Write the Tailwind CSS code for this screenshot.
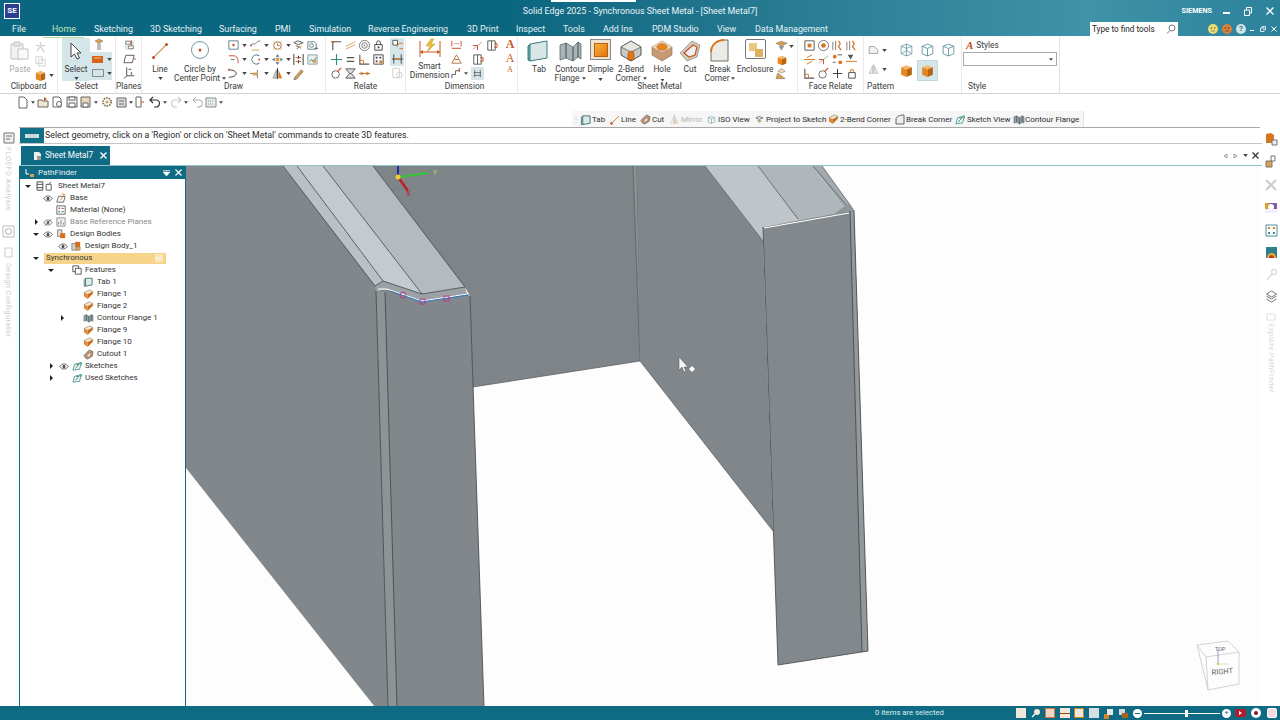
<!DOCTYPE html>
<html>
<head>
<meta charset="utf-8">
<script src="https://cdn.jsdelivr.net/npm/@tailwindcss/browser@4"></script>
</head>
<body class="w-[1280px] h-[720px] overflow-hidden bg-white flex flex-col font-['Roboto','Noto_Sans',sans-serif] text-[#333] text-[8.5px] leading-none">
<svg class="hidden" width="0" height="0">
<defs>
<symbol id="dd" viewBox="0 0 6 4"><path d="M0 0h6L3 4z" fill="#444"/></symbol>
<symbol id="tr" viewBox="0 0 6 8"><path d="M1 0l4 4-4 4z" fill="#222"/></symbol>
<symbol id="td" viewBox="0 0 8 6"><path d="M0 1h8L4 5z" fill="#222"/></symbol>
<symbol id="eye" viewBox="0 0 12 10"><path d="M1 5c2-4 8-4 10 0-2 4-8 4-10 0z" fill="#fff" stroke="#444"/><circle cx="6" cy="5" r="1.8" fill="#444"/></symbol>
<symbol id="eyex" viewBox="0 0 12 10"><path d="M1 5c2-4 8-4 10 0-2 4-8 4-10 0z" fill="#fff" stroke="#666"/><circle cx="6" cy="5" r="1.8" fill="#666"/><path d="M2 9L10 1" stroke="#666"/></symbol>
<symbol id="fl" viewBox="0 0 12 12"><path d="M1 4l6-3 4 2-6 3z" fill="#f2e6d2" stroke="#8a6a44" stroke-width=".6"/><path d="M1 4l4 2v5L1 8z" fill="#e08b2c"/><path d="M5 6l6-3v2L5 11z" fill="#c96f1c"/></symbol>
<symbol id="tabi" viewBox="0 0 12 12"><path d="M3 1.5h8v8l-8 1.5z" fill="#dceaea" stroke="#3d6b6b"/><path d="M3 1.5L1.5 3v8L3 11" fill="none" stroke="#3d6b6b"/></symbol>
<symbol id="cfl" viewBox="0 0 13 12"><path d="M1 3l3-1v7L1 10zM4 2l3 2v7L4 9zM7 4l3-2v7l-3 2zM10 2l2 1v7l-2-1z" fill="#8fa0a4" stroke="#4c5a5e" stroke-width=".5"/></symbol>
<symbol id="cut" viewBox="0 0 12 12"><path d="M3 10l-2-3 6-6 4 2-1 5-5 3z" fill="#b89a7e" stroke="#555" stroke-width=".7"/><path d="M4 7l3-3 2 1-1 3-2 1z" fill="#e4ded2" stroke="#c0481c" stroke-width=".6"/></symbol>
<symbol id="sk" viewBox="0 0 13 12"><path d="M1 11l2-7 8-2-2 8z" fill="#f3f6f6" stroke="#3f8f9a"/><path d="M4 9l5-6M5 4h3" stroke="#2f7f4f"/><path d="M9 1l3 1-1 3z" fill="#48a4b0"/></symbol>
<symbol id="lay" viewBox="0 0 12 12"><path d="M1 1h7v7H1z" fill="#fff" stroke="#444"/><path d="M4 4h7v7H4z" fill="#fff" stroke="#444"/></symbol>
<symbol id="bd" viewBox="0 0 12 12"><path d="M2 1h5v8H2z" fill="#e9e4da" stroke="#555" stroke-width=".8"/><path d="M5 5h6v6H5z" fill="#d4701f"/></symbol>
<symbol id="body1" viewBox="0 0 12 12"><path d="M1 3h6v8H1z" fill="#d0d0cc" stroke="#555" stroke-width=".7"/><path d="M5 1h6v6H5z" fill="#d4701f"/><path d="M6 7h5v4H6z" fill="#e8a45c" stroke="#555" stroke-width=".5"/></symbol>
<symbol id="base" viewBox="0 0 12 12"><path d="M1 11l2-7h8l-2 7z" fill="none" stroke="#555"/><path d="M7 1l4 1M5 9l4-6" stroke="#d8741a"/></symbol>
<symbol id="mat" viewBox="0 0 12 12"><path d="M1 1h10v10H1z" fill="#fff" stroke="#555"/><path d="M3 3h2v2H3z" fill="#c9572a"/><path d="M3 7h2v2H3z" fill="#3f8f9a"/><path d="M6.5 4h3M6.5 8h3" stroke="#555"/></symbol>
<symbol id="pl" viewBox="0 0 12 12"><path d="M1 1h10v10H1z" fill="#eee" stroke="#888"/><path d="M3 9V6M6 9V4M9 9V7" stroke="#999" stroke-width="1.4"/></symbol>
<symbol id="root" viewBox="0 0 22 12"><path d="M2 1h7v10H2z" fill="#fff" stroke="#333"/><path d="M2 4h7M2 8h7" stroke="#333"/><path d="M13 4h6v7h-6z" fill="#fff" stroke="#444"/><path d="M16 4l3-3" stroke="#444"/></symbol>

<symbol id="i-sq" viewBox="0 0 14 14"><path d="M2 2h10v9H2z" fill="#fff" stroke="#5a7f87"/><circle cx="7" cy="6.5" r="1.3" fill="#d1491f"/></symbol>
<symbol id="i-rel" viewBox="0 0 14 14"><path d="M2 7c1-3 4-1 5-2s1-2 5-3" fill="none" stroke="#5a7f87"/><circle cx="2" cy="7" r="1" fill="#d1491f"/><path d="M3 12h8" stroke="#d8a050"/></symbol>
<symbol id="i-cir" viewBox="0 0 14 14"><path d="M2 2h10v10H2z" fill="#dbe7ea"/><circle cx="7" cy="7" r="4" fill="#fff" stroke="#d8741a"/><path d="M7 7V4.5M7 7h2.5" stroke="#555" stroke-width=".7"/></symbol>
<symbol id="i-arc" viewBox="0 0 14 14"><path d="M2 3h5c4 0 5 3 5 8" fill="none" stroke="#d1491f" stroke-width="1"/><path d="M2 3v0M4 7h4" stroke="#5a7f87"/></symbol>
<symbol id="i-c2" viewBox="0 0 14 14"><path d="M11 3a5 5 0 1 0 0 8" fill="none" stroke="#5a7f87" stroke-width="1"/><circle cx="11" cy="7" r="1" fill="#d1491f"/><path d="M9 2l2 1M9 12l2-1" stroke="#5a7f87"/></symbol>
<symbol id="i-mv" viewBox="0 0 14 14"><path d="M7 1l2 3H5zM7 13l2-3H5zM1 7l3-2v4zM13 7l-3-2v4z" fill="#5a7f87"/><path d="M5 5h4v4H5z" fill="#d8a050"/></symbol>
<symbol id="i-arc2" viewBox="0 0 14 14"><path d="M2 3c5 0 8 2 8 4s-3 4-8 4" fill="none" stroke="#333" stroke-width="1"/><circle cx="2" cy="3" r="1" fill="#d1491f"/></symbol>
<symbol id="i-tr" viewBox="0 0 14 14"><path d="M1 7h8M9 3v9" stroke="#777" stroke-width="1"/><path d="M4 6h5v3H4z" fill="#d8a050"/></symbol>
<symbol id="i-mir" viewBox="0 0 14 14"><path d="M7 1v12" stroke="#333"/><path d="M6 3v9H2z" fill="#c9c9c9" stroke="#777" stroke-width=".6"/><path d="M8 3v9h4z" fill="#d8741a"/></symbol>
<symbol id="i-a" viewBox="0 0 14 14"><path d="M2 4l4-2 6 2-5 2zM4 7l4 2M5 11l3-3" stroke="#555" fill="none"/><path d="M7 7l3 1-1 3z" fill="#d8a050"/></symbol>
<symbol id="i-b" viewBox="0 0 14 14"><path d="M2 3h7l2 2v6H2z" fill="none" stroke="#5a7f87"/><circle cx="6" cy="7" r="2" fill="none" stroke="#5a7f87"/><path d="M9 10h4" stroke="#555"/></symbol>
<symbol id="i-d" viewBox="0 0 14 14"><path d="M2 1v12" stroke="#333"/><path d="M12 1v12" stroke="#333"/><path d="M4 5h6M4 9h6" stroke="#d1491f"/><path d="M7 3v3M7 8v3" stroke="#333"/></symbol>
<symbol id="i-e" viewBox="0 0 14 14"><path d="M2 2h10v10H2z" fill="#e6eef0" stroke="#5a7f87" stroke-width=".7"/><path d="M4 9l2-2 2 2 3-4" stroke="#2f7f4f" fill="none"/><circle cx="9" cy="9" r="2" fill="#d8a050"/></symbol>
<symbol id="i-p" viewBox="0 0 14 14"><path d="M3 11l7-8 2 2-7 8-3 1z" fill="#d8a050" stroke="#555" stroke-width=".6"/></symbol>
<symbol id="r-a" viewBox="0 0 14 14"><path d="M3 12V3h9" fill="none" stroke="#555" stroke-width="1.2"/><path d="M1 3h4" stroke="#d1491f" stroke-width="1.2"/></symbol>
<symbol id="r-b" viewBox="0 0 14 14"><path d="M2 8l10-5M2 11l10-5" stroke="#d8a050"/></symbol>
<symbol id="r-c" viewBox="0 0 14 14"><circle cx="7" cy="7" r="5.5" fill="none" stroke="#777"/><circle cx="7" cy="7" r="3" fill="none" stroke="#777"/><circle cx="7" cy="7" r="1" fill="#888"/></symbol>
<symbol id="r-d" viewBox="0 0 14 14"><path d="M3 6h8v6H3z" fill="#fff" stroke="#444"/><path d="M5 6V4a2 2 0 0 1 4 0v2" fill="none" stroke="#444"/><path d="M6 8h2v2H6z" fill="#444"/></symbol>
<symbol id="r-e" viewBox="0 0 14 14"><path d="M7 1v12M1 7h12" stroke="#2f8f7f" stroke-width="1.2"/></symbol>
<symbol id="r-f" viewBox="0 0 14 14"><path d="M3 5h8M3 9h8" stroke="#555" stroke-width="1.3"/></symbol>
<symbol id="r-g" viewBox="0 0 14 14"><path d="M2 2v10h10" fill="none" stroke="#555" stroke-width="1.2"/><path d="M2 8h4v4" fill="none" stroke="#d8741a"/></symbol>
<symbol id="r-h" viewBox="0 0 14 14"><path d="M2 2h10v10H2z" fill="#fff" stroke="#444"/><path d="M4 4h2v2H4zM8 4h2v2H8zM4 8h2v2H4z" fill="#444"/><path d="M8 8h3v3H8z" fill="#d8741a"/></symbol>
<symbol id="r-i" viewBox="0 0 14 14"><circle cx="6" cy="8" r="4" fill="none" stroke="#666"/><path d="M8 5l4-4" stroke="#d1491f" stroke-width="1.2"/></symbol>
<symbol id="r-j" viewBox="0 0 14 14"><path d="M2 2l4 5-4 5h10l-4-5 4-5z" fill="#ddd" stroke="#555"/><path d="M6 7h2" stroke="#555"/></symbol>
<symbol id="r-k" viewBox="0 0 14 14"><path d="M1 7h12" stroke="#a87840"/><circle cx="4" cy="7" r="1.3" fill="none" stroke="#d8741a"/><circle cx="10" cy="7" r="1.3" fill="none" stroke="#d8741a"/></symbol>
<symbol id="r-l" viewBox="0 0 14 14"><path d="M2 2h10v10H2z" fill="#dbe7ea"/><path d="M3 3h5v3H3zM6 8h5v3H6z" fill="#fff" stroke="#555" stroke-width=".7"/><path d="M9 2v6" stroke="#d1491f"/></symbol>
<symbol id="d-a" viewBox="0 0 14 14"><path d="M2 2v6M12 2v6M2 10h10" stroke="#d1491f"/><path d="M4 5h6" stroke="#a8a8a8"/></symbol>
<symbol id="d-b" viewBox="0 0 14 14"><path d="M7 2l5 9H2z" fill="none" stroke="#a87840"/><path d="M5 7h4" stroke="#d1491f"/></symbol>
<symbol id="d-c" viewBox="0 0 14 14"><path d="M2 12V8h4V4h4V1" fill="none" stroke="#555"/><circle cx="10" cy="4" r="1" fill="#d1491f"/></symbol>
<symbol id="d-e" viewBox="0 0 14 14"><path d="M3 2h8v10H3z" fill="none" stroke="#555"/><path d="M7 2v10" stroke="#555"/><path d="M10 5h3v4h-3" fill="none" stroke="#d1491f"/></symbol>
<symbol id="d-f" viewBox="0 0 14 14"><path d="M2 2h10v10H2z" fill="#dbe7ea"/><path d="M4 3v8M10 3v8M3 6h8M3 9h8" stroke="#555" stroke-width=".8"/></symbol>
<symbol id="d-g" viewBox="0 0 14 14"><path d="M2 11L12 3" stroke="#a8a8a8"/><path d="M2 7h5v5" fill="none" stroke="#d1491f"/></symbol>
<symbol id="f-a" viewBox="0 0 14 14"><path d="M2 2h10v10H2z" fill="#fff" stroke="#555"/><path d="M5 5h4v4H5z" fill="#d8741a"/></symbol>
<symbol id="f-b" viewBox="0 0 14 14"><circle cx="7" cy="7" r="5.5" fill="none" stroke="#777"/><circle cx="7" cy="7" r="2.5" fill="#d8741a"/></symbol>
<symbol id="f-c" viewBox="0 0 14 14"><path d="M2 3v9M5 2v10" stroke="#777"/><path d="M8 2l2 3-2 3 3 4" fill="none" stroke="#d8741a" stroke-width="1.3"/></symbol>
<symbol id="f-h" viewBox="0 0 14 14"><circle cx="4" cy="4" r="2" fill="#d8741a"/><circle cx="10" cy="10" r="2" fill="#d8741a"/><path d="M7 2h5M2 10h3" stroke="#555"/></symbol>
<symbol id="f-s" viewBox="0 0 14 14"><path d="M1 7h12M4 5l6-3M4 12l6-3" stroke="#d8741a"/></symbol>
<symbol id="f-t" viewBox="0 0 14 14"><path d="M1 9h12" stroke="#d8741a"/><path d="M3 2h6l-3 5z" fill="#555"/></symbol>
<symbol id="f-u" viewBox="0 0 14 14"><path d="M4 6h7v6H4z" fill="#fff" stroke="#444"/><path d="M6 6V3h3v3" fill="none" stroke="#d8741a"/></symbol>
<symbol id="cube" viewBox="0 0 14 14"><path d="M2 4l5-2 5 2-5 2z" fill="#f3b86a"/><path d="M2 4l5 2v7l-5-2z" fill="#e8861e"/><path d="M12 4l-5 2v7l5-2z" fill="#b9640f"/></symbol>
<symbol id="wire" viewBox="0 0 14 14"><path d="M2 4l5-2 5 2v7l-5 2-5-2z M2 4l5 2 5-2 M7 6v7" fill="none" stroke="#5a8f9a" stroke-width=".8"/></symbol>
<symbol id="wire2" viewBox="0 0 14 14"><path d="M2 4l5-2 5 2v7l-5 2-5-2z M2 4l5 2 5-2 M7 6v7 M2 11l5-3 5 3M7 2v6" fill="none" stroke="#5a8f9a" stroke-width=".7"/></symbol>
<symbol id="stop" viewBox="0 0 14 14"><path d="M2 3h6l4 4v4H2z" fill="#f3f3f3" stroke="#999"/></symbol>
</defs>
</svg>

<!-- title bar -->
<header class="relative h-[36px] shrink-0 flex flex-col bg-linear-to-r from-[#0b6680] from-40% via-[#3f93a8] via-85% to-[#2b829b] text-white">
  <div class="absolute top-0 left-[551px] w-[85px] h-[2px] bg-white"></div>
  <div class="h-[22px] grid grid-cols-[1fr_auto_1fr] items-center">
    <div class="pl-[4px]"><div class="w-[16px] h-[16px] bg-[#2b3e90] border border-white text-[8px] font-bold flex items-center justify-center">SE</div></div>
    <div class="text-[8.9px] text-[#eaf4f6]">Solid Edge 2025 - Synchronous Sheet Metal - [Sheet Metal7]</div>
    <div class="flex items-center justify-end pr-[4px]">
      <span class="text-[7.2px] font-bold mr-[11px]">SIEMENS</span>
      <span class="w-[7px] h-[2px] bg-white mt-[3px] mr-[14px]"></span>
      <svg class="w-[8px] h-[9px] mr-[14px]" viewBox="0 0 8 9"><path d="M0.5 3h5v5.5h-5zM2.5 3V.5h5v5.500h-2" fill="none" stroke="#fff"/></svg>
      <svg class="w-[8px] h-[8px] mr-[2px]" viewBox="0 0 8 8"><path d="M.5.5l7 7M7.5.5l-7 7" stroke="#fff" stroke-width="1.3"/></svg>
    </div>
  </div>
  <div class="relative flex-1 flex items-start">
    <nav class="flex pl-[12px] text-[8.9px] text-[#e3f0f3] items-center h-[14px] whitespace-nowrap">
      <span class="w-[40px]">File</span>
      <span class="relative w-[42px] text-[#bfe6b8]">Home<span class="absolute -left-[9px] w-[41px] top-[12px] h-px bg-[#b7d99a]"></span></span>
      <span class="w-[56px]">Sketching</span>
      <span class="w-[69px]">3D Sketching</span>
      <span class="w-[56px]">Surfacing</span>
      <span class="w-[34px]">PMI</span>
      <span class="w-[59px]">Simulation</span>
      <span class="w-[99px]">Reverse Engineering</span>
      <span class="w-[49px]">3D Print</span>
      <span class="w-[47px]">Inspect</span>
      <span class="w-[40px]">Tools</span>
      <span class="w-[49px]">Add Ins</span>
      <span class="w-[65px]">PDM Studio</span>
      <span class="w-[38px]">View</span>
      <span>Data Management</span>
    </nav>
    <div class="ml-auto flex items-center h-[14px] pr-[3px]">
      <div class="w-[88px] h-[14px] bg-white text-[#222] text-[8.2px] flex items-center justify-between pl-[2px] pr-[2px] mr-[30px]">Type to find tools
        <svg class="w-[10px] h-[10px]" viewBox="0 0 10 10"><circle cx="6" cy="4" r="3" fill="none" stroke="#777"/><path d="M4 6.5L1 9.5" stroke="#777"/></svg>
      </div>
      <svg class="w-[10px] h-[10px] mr-[4px]" viewBox="0 0 10 10"><circle cx="5" cy="5" r="5" fill="#e6dc70"/><circle cx="3.400" cy="4" r=".7" fill="#555"/><circle cx="6.600" cy="4" r=".7" fill="#555"/><path d="M3 6.500c1 1 3 1 4 0" fill="none" stroke="#555" stroke-width=".6"/></svg>
      <svg class="w-[10px] h-[10px] mr-[4px]" viewBox="0 0 10 10"><circle cx="5" cy="5" r="5" fill="#d9803f"/><circle cx="3.400" cy="4" r=".7" fill="#6b3010"/><circle cx="6.600" cy="4" r=".7" fill="#6b3010"/><path d="M3 7.500c1-1 3-1 4 0" fill="none" stroke="#6b3010" stroke-width=".6"/></svg>
      <span class="w-[10px] h-[10px] rounded-full bg-[#cfe3e8] mr-[4px] flex items-center justify-center text-[#2b829b] text-[8px] font-bold">?</span>
      <span class="w-[4px] h-px bg-white mr-[6px] mt-[2px]"></span>
      <svg class="w-[6px] h-[6px] mr-[5px]" viewBox="0 0 6 6"><path d="M.5 2h3.500v3.500H.5zM2 2V.5h3.500V4" fill="none" stroke="#fff" stroke-width=".8"/></svg>
      <svg class="w-[6px] h-[6px]" viewBox="0 0 6 6"><path d="M.5.5l5 5M5.500.5l-5 5" stroke="#fff"/></svg>
    </div>
  </div>
</header>

<!-- ribbon -->
<section class="h-[58px] shrink-0 flex border-b border-[#d4d4d4] text-[8.4px] text-[#3a3a3a] bg-white">
  <!-- Clipboard -->
  <div class="w-[58px] flex flex-col border-r border-[#eaeaea]">
    <div class="h-[46px] flex pl-[9px] pt-[5px]">
      <div class="w-[22px] flex flex-col items-center text-[#aaa]">
        <svg class="w-[20px] h-[19px] shrink-0" viewBox="0 0 20 19"><path d="M1 3h12v15H1z" fill="#f2f2f2" stroke="#c4c4c4"/><path d="M4 1h6v4H4z" fill="#e6e6e6" stroke="#c4c4c4"/><path d="M8 8h10v10H8z" fill="#fafafa" stroke="#c4c4c4"/></svg>
        <span class="mt-[5px]">Paste</span>
      </div>
      <div class="ml-[3px] flex flex-col gap-[1px] items-start">
        <svg class="w-[13px] h-[13px]" viewBox="0 0 14 14"><path d="M7 1v5l4 6M7 6l-4 5M2 5h4M8 5h4" stroke="#cfcfcf" stroke-width="1.3" fill="none"/></svg>
        <svg class="w-[13px] h-[13px]" viewBox="0 0 14 14"><path d="M2 2h7v7H2z M5 5h7v7H5z" fill="#fff" stroke="#cfcfcf"/></svg>
        <div class="flex items-center"><svg class="w-[13px] h-[13px]"><use href="#cube"/></svg><svg class="w-[5px] h-[3px] ml-[2px]"><use href="#dd"/></svg></div>
      </div>
    </div>
    <div class="text-center">Clipboard</div>
  </div>
  <!-- Select -->
  <div class="w-[58px] flex flex-col border-r border-[#eaeaea]">
    <div class="h-[46px] flex pl-[4px] pt-[2px]">
      <div class="w-[28px] h-[43px] bg-[#d5e6ea] flex flex-col items-center pt-[4px]">
        <svg class="w-[14px] h-[18px] shrink-0" viewBox="0 0 14 18"><path d="M2 1l10 10H8l2.500 5-2.500 1-2.500-5L2 15z" fill="#fff" stroke="#444"/></svg>
        <span class="mt-[5px]">Select</span>
        <svg class="w-[5px] h-[3px] mt-[4px]"><use href="#dd"/></svg>
      </div>
      <div class="flex flex-col">
        <svg class="w-[14px] h-[14px] ml-[2px]" viewBox="0 0 14 14"><path d="M3 3l4-2 4 2-4 3z" fill="#d8a050" stroke="#777" stroke-width=".5"/><path d="M5 6h4v6H5z" fill="#bbb"/></svg>
        <div class="flex items-center bg-[#d5e6ea] h-[14px] w-[22px] pl-[2px]"><svg class="w-[13px] h-[9px]" viewBox="0 0 13 9"><path d="M0 1h11v7H0z" fill="#d8641a"/><path d="M2 3h7" stroke="#f4c080"/></svg><svg class="w-[5px] h-[3px] ml-[2px]"><use href="#dd"/></svg></div>
        <div class="flex items-center bg-[#d5e6ea] h-[14px] w-[22px] pl-[2px]"><svg class="w-[13px] h-[9px]" viewBox="0 0 13 9"><path d="M.5.5h11v7H.5z" fill="none" stroke="#888"/></svg><svg class="w-[5px] h-[3px] ml-[2px]"><use href="#dd"/></svg></div>
      </div>
    </div>
    <div class="text-center">Select</div>
  </div>
  <!-- Planes -->
  <div class="w-[26px] flex flex-col border-r border-[#eaeaea]">
    <div class="h-[46px] flex flex-col items-center pt-[2px] pl-[1px]">
      <svg class="w-[13px] h-[14px]"><use href="#r-l"/></svg>
      <svg class="w-[13px] h-[14px]" viewBox="0 0 14 14"><path d="M3 3h9l-2 8H1z" fill="#fff" stroke="#555"/><path d="M12 7h2" stroke="#d1491f"/></svg>
      <svg class="w-[13px] h-[14px]" viewBox="0 0 14 14"><path d="M4 1v9h8M4 10l-3 3M6 3h3M9 6v3" stroke="#444" fill="none"/></svg>
    </div>
    <div class="text-center">Planes</div>
  </div>
  <!-- Draw -->
  <div class="w-[184px] flex flex-col border-r border-[#eaeaea]">
    <div class="h-[46px] flex pt-[2px]">
      <div class="w-[36px] flex flex-col items-center pt-[4px]">
        <svg class="w-[18px] h-[18px] shrink-0" viewBox="0 0 18 18"><path d="M2 16L16 2" stroke="#c8a070" stroke-width="1.2"/><circle cx="2.500" cy="15.500" r="1.500" fill="#c9471c"/><circle cx="15.500" cy="2.500" r="1.500" fill="#c9471c"/></svg>
        <span class="mt-[5px]">Line</span>
        <svg class="w-[5px] h-[3px] mt-[4px]"><use href="#dd"/></svg>
      </div>
      <div class="w-[44px] flex flex-col items-center pt-[2px] whitespace-nowrap">
        <svg class="w-[20px] h-[20px] shrink-0" viewBox="0 0 20 20"><circle cx="10" cy="10" r="8.500" fill="none" stroke="#6f9aa3"/><circle cx="10" cy="10" r="1.500" fill="#d1491f"/></svg>
        <span class="mt-[5px]">Circle by</span>
        <span class="mt-px flex items-center">Center Point<svg class="w-[4px] h-[3px] ml-[2px]"><use href="#dd"/></svg></span>
      </div>
      <div class="ml-[5px] grid grid-cols-[22px_22px_21px] grid-rows-[14px_14px_14px] items-center">
        <div class="flex items-center"><svg class="w-[13px] h-[13px]"><use href="#i-sq"/></svg><svg class="w-[5px] h-[3px] ml-[2px]"><use href="#dd"/></svg></div>
        <div class="flex items-center"><svg class="w-[13px] h-[13px]"><use href="#i-rel"/></svg><svg class="w-[5px] h-[3px] ml-[2px]"><use href="#dd"/></svg></div>
        <div class="flex items-center"><svg class="w-[13px] h-[13px]"><use href="#i-cir"/></svg><svg class="w-[5px] h-[3px] ml-[2px]"><use href="#dd"/></svg></div>
        <div class="flex items-center"><svg class="w-[13px] h-[13px]"><use href="#i-arc"/></svg><svg class="w-[5px] h-[3px] ml-[2px]"><use href="#dd"/></svg></div>
        <div class="flex items-center"><svg class="w-[13px] h-[13px]"><use href="#i-c2"/></svg><svg class="w-[5px] h-[3px] ml-[2px]"><use href="#dd"/></svg></div>
        <div class="flex items-center"><svg class="w-[13px] h-[13px]"><use href="#i-mv"/></svg><svg class="w-[5px] h-[3px] ml-[2px]"><use href="#dd"/></svg></div>
        <div class="flex items-center"><svg class="w-[13px] h-[13px]"><use href="#i-arc2"/></svg><svg class="w-[5px] h-[3px] ml-[2px]"><use href="#dd"/></svg></div>
        <div class="flex items-center"><svg class="w-[13px] h-[13px]"><use href="#i-tr"/></svg><svg class="w-[5px] h-[3px] ml-[2px]"><use href="#dd"/></svg></div>
        <div class="flex items-center"><svg class="w-[13px] h-[13px]"><use href="#i-mir"/></svg><svg class="w-[5px] h-[3px] ml-[2px]"><use href="#dd"/></svg></div>
      </div>
      <div class="grid grid-cols-[14px_14px] grid-rows-[14px_14px_14px] items-center">
        <svg class="w-[13px] h-[13px]"><use href="#i-a"/></svg>
        <svg class="w-[13px] h-[13px]"><use href="#i-b"/></svg>
        <svg class="w-[13px] h-[13px]"><use href="#i-d"/></svg>
        <svg class="w-[13px] h-[13px]"><use href="#i-e"/></svg>
        <svg class="w-[13px] h-[13px]"><use href="#i-p"/></svg>
      </div>
    </div>
    <div class="text-center">Draw</div>
  </div>
  <!-- Relate -->
  <div class="w-[80px] flex flex-col border-r border-[#eaeaea]">
    <div class="h-[46px] flex pt-[2px] pl-[3px]">
      <div class="grid grid-cols-[14px_14px_14px_14px] grid-rows-[14px_14px_14px] items-center justify-items-center">
        <svg class="w-[13px] h-[13px]"><use href="#r-a"/></svg>
        <svg class="w-[13px] h-[13px]"><use href="#r-b"/></svg>
        <svg class="w-[13px] h-[13px]"><use href="#r-c"/></svg>
        <svg class="w-[13px] h-[13px]"><use href="#r-d"/></svg>
        <svg class="w-[13px] h-[13px]"><use href="#r-e"/></svg>
        <svg class="w-[13px] h-[13px]"><use href="#r-f"/></svg>
        <svg class="w-[13px] h-[13px]"><use href="#r-g"/></svg>
        <svg class="w-[13px] h-[13px]"><use href="#r-h"/></svg>
        <svg class="w-[13px] h-[13px]"><use href="#r-i"/></svg>
        <svg class="w-[13px] h-[13px]"><use href="#r-j"/></svg>
        <svg class="w-[13px] h-[13px]"><use href="#r-k"/></svg>
      </div>
      <div class="ml-[5px] w-[14px] flex flex-col items-center">
        <div class="bg-[#d5e6ea] w-[14px] flex flex-col items-center"><svg class="w-[13px] h-[14px]" viewBox="0 0 14 14"><path d="M2 2h5v5H2z" fill="#fff" stroke="#555"/><path d="M6 9l3-4M9 5h4M9 11h4" stroke="#d8741a"/></svg><svg class="w-[13px] h-[14px]" viewBox="0 0 14 14"><path d="M3 2v10M11 2v10M1 7h12" stroke="#444"/><path d="M5 7h4" stroke="#d8741a" stroke-width="1.5"/></svg></div>
        <svg class="w-[13px] h-[14px]" viewBox="0 0 14 14"><path d="M2 2h7v10H2z" fill="none" stroke="#ccc"/><circle cx="9" cy="9" r="3" fill="none" stroke="#ccc"/></svg>
      </div>
    </div>
    <div class="text-center">Relate</div>
  </div>
  <!-- Dimension -->
  <div class="w-[112px] flex flex-col border-r border-[#eaeaea]">
    <div class="h-[46px] flex pt-[2px]">
      <div class="w-[44px] flex flex-col items-center pl-[3px]">
        <svg class="w-[22px] h-[21px] shrink-0" viewBox="0 0 22 21"><path d="M1 3v16M21 3v16M1 14h20" stroke="#c9571c"/><path d="M1 14l3-2v4zM21 14l-3-2v4z" fill="#c9571c"/><path d="M12 1l-5 7h4l-3 6 8-8h-4l3-5z" fill="#e8c040" stroke="#b98a20" stroke-width=".5"/></svg>
        <span class="mt-[3px]">Smart</span>
        <span class="mt-px">Dimension</span>
      </div>
      <div class="grid grid-cols-[21px_14px_14px] grid-rows-[14px_14px_14px] items-center">
        <svg class="w-[13px] h-[13px]"><use href="#d-a"/></svg>
        <svg class="w-[13px] h-[13px]"><use href="#d-g"/></svg>
        <svg class="w-[13px] h-[13px]"><use href="#d-e"/></svg>
        <svg class="w-[13px] h-[13px]"><use href="#d-b"/></svg>
        <svg class="w-[13px] h-[13px]"><use href="#d-e"/></svg>
        <span></span>
        <div class="flex items-center"><svg class="w-[13px] h-[13px]"><use href="#d-c"/></svg><svg class="w-[4px] h-[3px] ml-px"><use href="#dd"/></svg></div>
        <svg class="w-[13px] h-[13px] bg-[#d5e6ea]"><use href="#d-f"/></svg>
      </div>
      <div class="ml-[4px] w-[14px] flex flex-col items-center font-['Liberation_Serif',serif] text-[#c9571c]">
        <span class="h-[14px] text-[12px] font-bold">A</span>
        <span class="h-[14px] text-[12px]">A</span>
        <span class="h-[14px] text-[8px]">A</span>
      </div>
    </div>
    <div class="pl-[6px] text-center">Dimension</div>
  </div>
  <!-- Sheet Metal -->
  <div class="w-[280px] flex flex-col border-r border-[#eaeaea]">
    <div class="h-[46px] flex pl-[5px] pt-[3px]">
      <div class="w-[32px] flex flex-col items-center">
        <svg class="w-[24px] h-[23px] shrink-0" viewBox="0 0 24 23"><path d="M3 5l17-3v17L3 22z" fill="#d9e6e6" stroke="#3d7a7a"/><path d="M3 5L1 7v14l2 1" fill="#5a9a9a" stroke="#3d7a7a"/></svg>
        <span class="mt-[3px]">Tab</span>
      </div>
      <div class="w-[30px] flex flex-col items-center whitespace-nowrap">
        <svg class="w-[24px] h-[23px] shrink-0" viewBox="0 0 24 23"><path d="M2 6l6-2v15l-6 2zM8 4l7 4v14l-7-3zM15 8l5-5v15l-5 4zM20 3l3 2v15l-3-2z" fill="#a9b4b8" stroke="#4c5a5e" stroke-width=".7"/></svg>
        <span class="mt-[3px]">Contour</span><span class="mt-px flex items-center">Flange<svg class="w-[4px] h-[3px] ml-[2px]"><use href="#dd"/></svg></span>
      </div>
      <div class="w-[31px] flex flex-col items-center">
        <div class="w-[21px] h-[21px] shrink-0 border border-[#888] bg-[#f1e3d4] flex items-center justify-center"><div class="w-[14px] h-[14px] bg-linear-to-br from-[#f8b13a] to-[#e2730e] border border-[#b8600c]"></div></div>
        <span class="mt-[5px]">Dimple</span>
        <svg class="w-[5px] h-[3px] mt-[5px]"><use href="#dd"/></svg>
      </div>
      <div class="w-[30px] flex flex-col items-center whitespace-nowrap">
        <svg class="w-[24px] h-[23px] shrink-0" viewBox="0 0 24 23"><path d="M2 8l10-6 10 6v8l-10 6L2 16z" fill="#c8c8c4" stroke="#555"/><path d="M2 8l10 5 10-5-10-6z" fill="#e6e6e0" stroke="#555" stroke-width=".7"/><path d="M9 21v-6a3 3 0 0 1 6 0v6z" fill="#e07818" stroke="#9a4c0c" stroke-width=".6"/></svg>
        <span class="mt-[3px]">2-Bend</span><span class="mt-px flex items-center">Corner<svg class="w-[4px] h-[3px] ml-[2px]"><use href="#dd"/></svg></span>
      </div>
      <div class="w-[32px] flex flex-col items-center">
        <svg class="w-[24px] h-[23px] shrink-0" viewBox="0 0 24 23"><path d="M2 8l10-6 10 6v8l-10 6L2 16z" fill="#c79a74" stroke="#8a6a48" stroke-width=".6"/><path d="M2 8l10 5 10-5-10-6z" fill="#ecd6bc"/><ellipse cx="12" cy="8" rx="5" ry="3.200" fill="#e8861e" stroke="#a05a10" stroke-width=".5"/></svg>
        <span class="mt-[3px]">Hole</span>
        <svg class="w-[5px] h-[3px] mt-[6px]"><use href="#dd"/></svg>
      </div>
      <div class="w-[24px] flex flex-col items-center">
        <svg class="w-[24px] h-[23px] shrink-0" viewBox="0 0 24 23"><path d="M2 14L14 2l8 4-3 12-10 4z" fill="#cfcabe" stroke="#8a8a80" stroke-width=".7"/><path d="M6 14l9-8 4 2-2 8-6 2z" fill="#eef1ef" stroke="#d04f1f" stroke-width="1.200"/></svg>
        <span class="mt-[3px]">Cut</span>
      </div>
      <div class="w-[36px] flex flex-col items-center whitespace-nowrap">
        <svg class="w-[24px] h-[23px] shrink-0" viewBox="0 0 24 23"><path d="M3 22V13C3 6 9 1 16 1h4v21z" fill="#ecebe6" stroke="#6e6e66"/><path d="M3 13C3 6 9 1 16 1" fill="none" stroke="#d8741a" stroke-width="2"/></svg>
        <span class="mt-[3px]">Break</span><span class="mt-px flex items-center">Corner<svg class="w-[4px] h-[3px] ml-[2px]"><use href="#dd"/></svg></span>
      </div>
      <div class="w-[34px] flex flex-col items-center">
        <div class="w-[21px] h-[20px] shrink-0 border border-[#777] rounded-[2px] bg-white relative overflow-hidden"><div class="absolute left-[3px] top-[3px] w-[8px] h-[8px] bg-[#e8c684]"></div><div class="absolute left-[9px] top-[9px] w-[8px] h-[8px] bg-[#e0b060]"></div></div>
        <span class="mt-[6px]">Enclosure</span>
      </div>
      <div class="w-[18px] flex flex-col items-start pl-[3px]">
        <div class="flex items-center h-[14px]"><svg class="w-[13px] h-[12px]" viewBox="0 0 14 12"><path d="M1 3l6-2 6 2-6 3z" fill="#d8a050" stroke="#666" stroke-width=".5"/><path d="M4 6h6l-3 5z" fill="#999"/></svg><svg class="w-[5px] h-[3px] ml-[1px]"><use href="#dd"/></svg></div>
        <div class="flex items-center h-[14px]"><svg class="w-[14px] h-[12px]"><use href="#cube"/></svg></div>
        <svg class="w-[13px] h-[14px]" viewBox="0 0 14 14"><path d="M3 4l4-3 4 3-4 2z" fill="#ead8b8" stroke="#666" stroke-width=".5"/><path d="M3 6l8 6H1z" fill="#d8a050" stroke="#666" stroke-width=".5"/></svg>
      </div>
    </div>
    <div class="text-center pl-[4px]">Sheet Metal</div>
  </div>
  <!-- Face relate -->
  <div class="w-[66px] flex flex-col border-r border-[#eaeaea]">
    <div class="h-[46px] pl-[4px] pt-[2px]">
      <div class="grid grid-cols-[14px_14px_14px_14px] grid-rows-[14px_14px_14px] items-center justify-items-center">
        <svg class="w-[13px] h-[13px]"><use href="#f-a"/></svg>
        <svg class="w-[13px] h-[13px]"><use href="#f-b"/></svg>
        <svg class="w-[13px] h-[13px]"><use href="#f-c"/></svg>
        <svg class="w-[13px] h-[13px]"><use href="#f-c"/></svg>
        <svg class="w-[13px] h-[13px]"><use href="#f-s"/></svg>
        <svg class="w-[13px] h-[13px]"><use href="#d-g"/></svg>
        <svg class="w-[13px] h-[13px]"><use href="#f-h"/></svg>
        <svg class="w-[13px] h-[13px]"><use href="#f-t"/></svg>
        <svg class="w-[13px] h-[13px]"><use href="#r-g"/></svg>
        <svg class="w-[13px] h-[13px]"><use href="#r-i"/></svg>
        <svg class="w-[13px] h-[13px]" viewBox="0 0 14 14"><path d="M7 2v10M2 7h10" stroke="#333"/></svg>
        <svg class="w-[13px] h-[13px]"><use href="#f-u"/></svg>
      </div>
    </div>
    <div class="text-center">Face Relate</div>
  </div>
  <!-- Pattern -->
  <div class="w-[30px] flex flex-col whitespace-nowrap">
    <div class="h-[46px] flex flex-col pl-[3px] pt-[8px] gap-[7px]">
      <div class="flex items-center"><svg class="w-[13px] h-[12px]"><use href="#stop"/></svg><svg class="w-[5px] h-[3px] ml-[2px]"><use href="#dd"/></svg></div>
      <div class="flex items-center"><svg class="w-[13px] h-[12px]" viewBox="0 0 14 14"><path d="M7 1v12" stroke="#ccc"/><path d="M6 3v9H2zM8 3v9h4z" fill="#f2f2f2" stroke="#bbb"/></svg><svg class="w-[5px] h-[3px] ml-[2px]"><use href="#dd"/></svg></div>
    </div>
    <div class="pl-[3px]">Pattern</div>
  </div>
  <!-- views -->
  <div class="w-[68px] border-r border-[#eaeaea] flex flex-col">
    <div class="pt-[3px] pl-[2px] grid grid-cols-[21px_21px_21px] grid-rows-[20px_22px] justify-items-center items-center">
      <svg class="w-[15px] h-[15px]"><use href="#wire2"/></svg>
      <svg class="w-[15px] h-[15px]"><use href="#wire"/></svg>
      <svg class="w-[15px] h-[15px]"><use href="#wire"/></svg>
      <svg class="w-[15px] h-[15px]"><use href="#cube"/></svg>
      <div class="w-[21px] h-[21px] bg-[#d5e6ea] border border-[#c2d8dd] flex items-center justify-center"><svg class="w-[15px] h-[15px]"><use href="#cube"/></svg></div>
    </div>
  </div>
  <!-- Style -->
  <div class="w-[98px] flex flex-col border-r border-[#e2e2e2] pl-[1px]">
    <div class="h-[46px] pt-[3px]">
      <div class="flex items-center h-[12px] pl-[3px]"><span class="font-['Liberation_Serif',serif] italic text-[#c9471c] text-[11px] font-bold mr-[3px]">A</span><span>Styles</span></div>
      <div class="w-[94px] h-[14px] border border-[#aaa] bg-white mt-[1px] flex items-center justify-end pr-[3px]"><svg class="w-[4px] h-[3px]"><use href="#dd"/></svg></div>
    </div>
    <div class="pl-[5px]">Style</div>
  </div>
</section>

<!-- QAT -->
<div class="h-[17px] shrink-0 flex items-center pl-[17px] pb-[1px] text-[#555]">
  <svg class="w-[12px] h-[13px]" viewBox="0 0 12 13"><path d="M2 1h5l3 3v8H2z" fill="#fff" stroke="#666"/></svg><svg class="w-[4px] h-[3px] ml-[2px]"><use href="#dd"/></svg>
  <svg class="w-[12px] h-[12px] ml-[2px]" viewBox="0 0 12 12"><path d="M1 4h4l1 1h5v6H1z" fill="#f0e6d2" stroke="#666"/><path d="M7 1l3 2-3 2z" fill="#c9571c"/></svg>
  <svg class="w-[12px] h-[12px] ml-[2px]" viewBox="0 0 12 12"><path d="M2 1h6l2 2v8H2z" fill="#fff" stroke="#666"/><circle cx="8" cy="8" r="2.500" fill="#fff" stroke="#666"/></svg>
  <svg class="w-[12px] h-[12px] ml-[3px]" viewBox="0 0 12 12"><path d="M1 1h10v10H1z" fill="#f2f2f2" stroke="#666"/><path d="M3 7h6v4H3zM3 1h6v3H3z" fill="#fff" stroke="#666"/></svg>
  <svg class="w-[12px] h-[12px] ml-[2px]" viewBox="0 0 12 12"><path d="M1 1h9v10H1z" fill="#e6d8b8" stroke="#666"/><path d="M3 7h5v4H3z" fill="#fff" stroke="#666"/></svg><svg class="w-[4px] h-[3px] ml-[2px]"><use href="#dd"/></svg>
  <svg class="w-[12px] h-[12px] ml-[3px]" viewBox="0 0 12 12"><circle cx="6" cy="6" r="4" fill="none" stroke="#8a7a5a" stroke-width="2" stroke-dasharray="1.500 1"/><circle cx="6" cy="6" r="1.500" fill="#c9a060"/></svg>
  <svg class="w-[12px] h-[12px] ml-[3px]" viewBox="0 0 12 12"><path d="M1 2h9v9H1z" fill="#ddd" stroke="#666"/><path d="M3 5h5M3 8h5" stroke="#666"/></svg><svg class="w-[4px] h-[3px] ml-[1px]"><use href="#dd"/></svg>
  <svg class="w-[12px] h-[12px]" viewBox="0 0 12 12"><path d="M3 1h5v10H3z" fill="#fff" stroke="#666"/><path d="M8 6h3" stroke="#c9571c"/></svg>
  <svg class="w-[12px] h-[12px] ml-[4px]" viewBox="0 0 12 12"><path d="M4 1L1 4l3 3M1 4h6a3 3 0 0 1 0 7H5" fill="none" stroke="#333" stroke-width="1.200"/></svg><svg class="w-[4px] h-[3px] ml-[2px]"><use href="#dd"/></svg>
  <svg class="w-[12px] h-[12px] ml-[3px]" viewBox="0 0 12 12"><path d="M8 1l3 3-3 3M11 4H5a3 3 0 0 0 0 7h2" fill="none" stroke="#ccc" stroke-width="1.200"/></svg><svg class="w-[4px] h-[3px] ml-[2px]"><use href="#dd"/></svg>
  <svg class="w-[12px] h-[12px] ml-[4px]" viewBox="0 0 12 12"><path d="M4 1L1 4l3 3M1 4h6a3 3 0 0 1 0 7H5" fill="none" stroke="#aaa"/></svg>
  <svg class="w-[12px] h-[11px] ml-[1px]" viewBox="0 0 12 11"><path d="M1 1h10v9H1z" fill="#e6eef0" stroke="#8a8a8a"/><path d="M3 4h6M3 7h6" stroke="#8a8a8a" stroke-dasharray="1 1"/></svg><svg class="w-[4px] h-[3px] ml-[2px]"><use href="#dd"/></svg>
</div>

<!-- command bar -->
<div class="h-[17px] shrink-0 flex pl-[19px] pr-[20px]">
  <div class="flex-1 border-b border-[#a8a8a8] flex pl-[553px]">
    <div class="h-[16px] pt-[1px] flex items-center bg-[#f6f6f6] border-r border-[#e4e4e4] text-[8px] text-[#2e2e2e] whitespace-nowrap">
      <span class="w-[7px] h-full flex items-center justify-center text-[#bbb] text-[8px]">⋮</span>
      <span class="w-[29px] flex items-center"><span class="w-[13px] flex justify-center"><svg class="w-[11px] h-[12px]"><use href="#tabi"/></svg></span>Tab</span>
      <span class="w-[31px] flex items-center"><span class="w-[13px] flex justify-center"><svg class="w-[10px] h-[10px]" viewBox="0 0 10 10"><path d="M1 9l8-8" stroke="#c88a40"/><circle cx="1.500" cy="8.500" r="1.200" fill="#c9471c"/></svg></span>Line</span>
      <span class="w-[29px] flex items-center"><span class="w-[13px] flex justify-center"><svg class="w-[11px] h-[11px]"><use href="#cut"/></svg></span>Cut</span>
      <span class="w-[37px] flex items-center text-[#b5b5b5]"><span class="w-[13px] flex justify-center"><svg class="w-[11px] h-[11px] opacity-30"><use href="#i-mir"/></svg></span>Mirror</span>
      <span class="w-[48px] flex items-center"><span class="w-[13px] flex justify-center"><svg class="w-[9px] h-[9px]"><use href="#wire"/></svg></span>ISO View</span>
      <span class="w-[74px] flex items-center"><span class="w-[13px] flex justify-center"><svg class="w-[11px] h-[10px]"><use href="#i-a"/></svg></span>Project to Sketch</span>
      <span class="w-[66px] flex items-center"><span class="w-[13px] flex justify-center"><svg class="w-[11px] h-[11px]"><use href="#fl"/></svg></span>2-Bend Corner</span>
      <span class="w-[61px] flex items-center"><span class="w-[13px] flex justify-center"><svg class="w-[10px] h-[11px]" viewBox="0 0 10 11"><path d="M1 10V5c0-2 3-4 8-4v9z" fill="#eee" stroke="#666"/></svg></span>Break Corner</span>
      <span class="w-[58px] flex items-center"><span class="w-[13px] flex justify-center"><svg class="w-[11px] h-[11px]"><use href="#sk"/></svg></span>Sketch View</span>
      <span class="w-[71px] flex items-center"><span class="w-[13px] flex justify-center"><svg class="w-[12px] h-[11px]"><use href="#cfl"/></svg></span>Contour Flange</span>
    </div>
  </div>
</div>

<!-- main -->
<main class="flex-1 min-h-0 flex">
  <aside class="w-[19px] shrink-0 flex flex-col items-center pr-[2px] text-[#c9cdd0]">
    <svg class="w-[12px] h-[12px] mt-[4px] shrink-0" viewBox="0 0 12 12"><path d="M1 1h10v10H1z" fill="#eee" stroke="#777"/><path d="M3 4h6M3 7h4" stroke="#777"/></svg>
    <span class="mt-[3px] [writing-mode:vertical-rl] text-[7.5px] tracking-[0.5px] whitespace-nowrap">FLOEFD Analysis</span>
    <svg class="w-[13px] h-[13px] mt-[14px] shrink-0" viewBox="0 0 13 13"><path d="M1 1h11v11H1z" fill="#fff" stroke="#bbb"/><circle cx="6.500" cy="6.500" r="3" fill="none" stroke="#aaa"/></svg>
    <svg class="w-[11px] h-[11px] mt-[9px] shrink-0" viewBox="0 0 11 11"><path d="M2 1h7v9H2z" fill="#fff" stroke="#ccc"/></svg>
    <span class="mt-[5px] [writing-mode:vertical-rl] text-[7.5px] tracking-[0.4px] whitespace-nowrap">Design Configurator</span>
  </aside>
  <div class="flex-1 min-w-0 flex flex-col">
    <!-- prompt -->
    <div class="h-[16px] shrink-0 flex border-b border-[#c4c4c4]">
      <div class="w-[24px] ml-px bg-[#0f7087] flex items-center justify-center"><span class="w-[14px] h-[4px] bg-[#cfd8da]"></span></div>
      <span class="pl-[1px] self-center text-[8.83px] text-[#2a2a2a] whitespace-nowrap">Select geometry, click on a 'Region' or click on 'Sheet Metal' commands to create 3D features.</span>
    </div>
    <!-- doc tabs -->
    <div class="h-[21px] shrink-0 flex items-end pt-[2px]">
      <div class="ml-[2px] w-[89px] h-[19px] bg-[#0f6a84] text-white flex items-center pl-[12px] pr-[3px] text-[8.2px]">
        <svg class="w-[9px] h-[10px] mr-[3px]" viewBox="0 0 9 10"><path d="M1 1h5l2 2v6H1z" fill="#eee"/><path d="M4 5h4v4H4z" fill="#999"/></svg>
        <span class="whitespace-nowrap">Sheet Metal7</span>
        <svg class="w-[7px] h-[7px] ml-auto" viewBox="0 0 7 7"><path d="M.5.5l6 6M6.500.5l-6 6" stroke="#fff" stroke-width="1.300"/></svg>
      </div>
      <div class="ml-auto flex items-center h-[19px] gap-[3px] pr-[3px]">
        <svg class="w-[5px] h-[6px]" viewBox="0 0 5 6"><path d="M4 1L1 3l3 2z" fill="none" stroke="#777" stroke-width=".7"/></svg>
        <svg class="w-[5px] h-[6px] ml-[2px]" viewBox="0 0 5 6"><path d="M1 1l3 2-3 2z" fill="none" stroke="#777" stroke-width=".7"/></svg>
        <svg class="w-[5px] h-[3px] ml-[2px]"><use href="#dd"/></svg>
        <svg class="w-[7px] h-[7px] ml-px" viewBox="0 0 7 7"><path d="M.5.5l6 6M6.500.5l-6 6" stroke="#333" stroke-width="1.200"/></svg>
      </div>
    </div>
    <!-- workspace -->
    <div class="flex-1 min-h-0 flex border-t border-[#8cc5cd]">
      <div class="w-[167px] shrink-0 flex flex-col border-l border-r border-[#0f6a84] bg-white">
        <div class="h-[13px] bg-[#0f6a84] text-[#e6f2f4] flex items-center pl-[5px] pr-[3px] text-[8.1px]">
          <svg class="w-[10px] h-[10px] mr-[3px]" viewBox="0 0 10 10"><path d="M1 1v5h3" fill="none" stroke="#fff"/><path d="M5 6h4v3H5z" fill="#d8a050"/></svg>
          PathFinder
          <svg class="w-[7px] h-[6px] ml-auto" viewBox="0 0 7 6"><path d="M0 2h7L3.500 6zM0 .5h7" fill="#fff" stroke="#fff" stroke-width=".6"/></svg>
          <svg class="w-[7px] h-[7px] ml-[5px]" viewBox="0 0 7 7"><path d="M.5.5l6 6M6.500.5l-6 6" stroke="#fff" stroke-width="1.200"/></svg>
        </div>
        <div class="pt-[1px] text-[8px] text-[#333] leading-[12px]">
          <div class="h-[12px] flex items-center"><svg class="w-[6px] h-[5px] ml-[5px]"><use href="#td"/></svg><svg class="w-[19px] h-[10px] ml-[4px]"><use href="#root"/></svg><span class="ml-[4px]">Sheet Metal7</span></div>
          <div class="h-[12px] flex items-center"><svg class="w-[10px] h-[9px] ml-[23px]"><use href="#eye"/></svg><svg class="w-[10px] h-[10px] ml-[3px]"><use href="#base"/></svg><span class="ml-[4px]">Base</span></div>
          <div class="h-[12px] flex items-center"><svg class="w-[10px] h-[10px] ml-[36px]"><use href="#mat"/></svg><span class="ml-[4px]">Material (None)</span></div>
          <div class="h-[12px] flex items-center"><svg class="w-[5px] h-[6px] ml-[14px]"><use href="#tr"/></svg><svg class="w-[10px] h-[9px] ml-[4px]"><use href="#eyex"/></svg><svg class="w-[10px] h-[10px] ml-[3px]"><use href="#pl"/></svg><span class="ml-[4px] text-[#8a8a8a]">Base Reference Planes</span></div>
          <div class="h-[12px] flex items-center"><svg class="w-[6px] h-[5px] ml-[13px]"><use href="#td"/></svg><svg class="w-[10px] h-[9px] ml-[4px]"><use href="#eye"/></svg><svg class="w-[10px] h-[10px] ml-[3px]"><use href="#bd"/></svg><span class="ml-[4px]">Design Bodies</span></div>
          <div class="h-[12px] flex items-center"><svg class="w-[10px] h-[9px] ml-[38px]"><use href="#eye"/></svg><svg class="w-[10px] h-[10px] ml-[3px]"><use href="#body1"/></svg><span class="ml-[4px]">Design Body_1</span></div>
          <div class="h-[12px] flex items-center"><svg class="w-[6px] h-[5px] ml-[13px]"><use href="#td"/></svg><div class="ml-[5px] w-[122px] h-[11px] bg-[#f6d58a] flex items-center justify-between pl-[2px] pr-[3px]"><span>Synchronous</span><svg class="w-[8px] h-[8px]" viewBox="0 0 8 8"><path d="M0 0h8v8H0z" fill="#fbe6b8"/><path d="M1 3l3 2 3-2" fill="none" stroke="#fff"/></svg></div></div>
          <div class="h-[12px] flex items-center"><svg class="w-[6px] h-[5px] ml-[28px]"><use href="#td"/></svg><svg class="w-[10px] h-[10px] ml-[18px]"><use href="#lay"/></svg><span class="ml-[3px]">Features</span></div>
          <div class="h-[12px] flex items-center"><svg class="w-[10px] h-[10px] ml-[63px]"><use href="#tabi"/></svg><span class="ml-[4px]">Tab 1</span></div>
          <div class="h-[12px] flex items-center"><svg class="w-[11px] h-[11px] ml-[63px]"><use href="#fl"/></svg><span class="ml-[3px]">Flange 1</span></div>
          <div class="h-[12px] flex items-center"><svg class="w-[11px] h-[11px] ml-[63px]"><use href="#fl"/></svg><span class="ml-[3px]">Flange 2</span></div>
          <div class="h-[12px] flex items-center"><svg class="w-[5px] h-[6px] ml-[40px]"><use href="#tr"/></svg><svg class="w-[11px] h-[10px] ml-[18px]"><use href="#cfl"/></svg><span class="ml-[3px]">Contour Flange 1</span></div>
          <div class="h-[12px] flex items-center"><svg class="w-[11px] h-[11px] ml-[63px]"><use href="#fl"/></svg><span class="ml-[3px]">Flange 9</span></div>
          <div class="h-[12px] flex items-center"><svg class="w-[11px] h-[11px] ml-[63px]"><use href="#fl"/></svg><span class="ml-[3px]">Flange 10</span></div>
          <div class="h-[12px] flex items-center"><svg class="w-[11px] h-[11px] ml-[63px]"><use href="#cut"/></svg><span class="ml-[3px]">Cutout 1</span></div>
          <div class="h-[12px] flex items-center"><svg class="w-[5px] h-[6px] ml-[29px]"><use href="#tr"/></svg><svg class="w-[10px] h-[9px] ml-[5px]"><use href="#eye"/></svg><svg class="w-[11px] h-[10px] ml-[3px]"><use href="#sk"/></svg><span class="ml-[2px]">Sketches</span></div>
          <div class="h-[12px] flex items-center"><svg class="w-[5px] h-[6px] ml-[29px]"><use href="#tr"/></svg><svg class="w-[11px] h-[10px] ml-[18px]"><use href="#sk"/></svg><span class="ml-[2px]">Used Sketches</span></div>
        </div>
      </div>
      <!-- canvas -->
      <div class="relative flex-1 min-w-0 bg-[#fdfdfd] overflow-hidden">
        <svg class="absolute left-0 top-0 w-[1094px] h-[541px]" viewBox="186 165 1094 541">
          <path d="M186 165H283L377 285 376 290 388 706H375L186 467z" fill="#82878b"/>
          <path d="M373 165H633L640 360 473 386 470 295 466 288z" fill="#7f8488"/>
          <path d="M633 165L637 165 643 358 640 360z" fill="#8c9194"/>
          <path d="M633 165L640 360M637 165L641 358" stroke="#53585c" stroke-width=".8"/>
          <path d="M637 165H705L763 240 773 530 640 360z" fill="#81868a"/>
          <path d="M283 165H297L383 280 375 285z" fill="#bac0c4"/>
          <path d="M297 165H323L422 293 383 280z" fill="#c4cace"/>
          <path d="M323 165H373L465 286 422 293z" fill="#b4bbbf"/>
          <path d="M375 285L383 280 422 293 465 286 467 293 422 301 387 288 376 290z" fill="#9ba1a4"/>
          <path d="M283 165L375 285M297 165L383 280M323 165L422 293M373 165L465 286M375 285L383 280 422 293 465 286" fill="none" stroke="#3f4448" stroke-width=".8"/>
          <path d="M376 290L387 288 422 301 468 293 470 295 484 706H388z" fill="#82878b"/>
          <path d="M376 290L385 291 397 706H388z" fill="#8e9396"/>
          <path d="M376 290L388 706M385 291L397 706M470 295L484 706" stroke="#3f4448" stroke-width=".8" fill="none"/>
          <path d="M378 288L387 288M387 288L422 300 468 293" stroke="#fff" stroke-width="1" fill="none"/>
          <path d="M390 290L422 301 468 294" stroke="#2f78c8" stroke-width="1" fill="none"/>
          <g fill="none" stroke="#c02a8a" stroke-width=".8"><circle cx="403" cy="294" r="3"/><rect x="420" y="298" width="5" height="5"/><rect x="444" y="295" width="5" height="5"/></g>
          <path d="M473 386L640 360M640 360L773 530" stroke="#53585c" stroke-width=".7" fill="none"/>
          <path d="M705 165H758L798 220 763 226 763 240z" fill="#bfc5c9"/>
          <path d="M758 165H813L847 211 798 220z" fill="#b0b7bb"/>
          <path d="M813 165H822L853 208 847 211z" fill="#a4abaf"/>
          <path d="M705 165L763 240M758 165L798 218M813 165L847 205M822 165L853 208" stroke="#4a4f53" stroke-width=".7" fill="none"/>
          <path d="M835 212L848 203 854 209 850 214z" fill="#90969a"/>
          <path d="M763 226L850 210 854 209 868 650 778 664z" fill="#83888c"/>
          <path d="M850 210L854 209 868 650 862 651z" fill="#93989b"/>
          <path d="M763 226L778 664 868 650 854 209M850 210L862 651" fill="none" stroke="#3f4448" stroke-width=".8"/>
          <path d="M764 227L849 212" stroke="#fff" stroke-width="1.200"/>
          <path d="M398 165V176" stroke="#1c2fa0" stroke-width="2"/>
          <path d="M399 176L428 172" stroke="#32c832" stroke-width="2"/>
          <path d="M398 176L408 190" stroke="#c01c2c" stroke-width="2.500"/>
          <circle cx="398" cy="176" r="2.500" fill="#e8d030"/>
          <text x="433" y="174" font-size="7" fill="#a8d070" font-family="Roboto">Y</text>
          <text x="406" y="195" font-size="8" fill="#b82a3a" font-family="Roboto">X</text>
          <path d="M679 356v13l3-3 2 5 2-1-2-4h4z" fill="#f4f4f4" stroke="#555" stroke-width=".5"/>
          <path d="M692 365l3 3-3 3-3-3z" fill="#fff"/>
          <g fill="none" stroke="#c8c8c8" stroke-width=".8"><path d="M1197 644L1228 640 1239 651V683L1208 689z"/><path d="M1197 644L1206 656 1239 651M1206 656L1208 689"/></g>
          <path d="M1218 648V663" stroke="#5566aa" stroke-width=".6"/>
          <path d="M1218 663h11" stroke="#a8e0a0" stroke-width=".6"/>
          <circle cx="1218" cy="663" r="1.200" fill="#d8c840"/>
          <text x="1211.500" y="673" font-size="7.500" fill="#666" font-family="Roboto" transform="rotate(-5 1223 670)">RIGHT</text>
          <text x="1215" y="650" font-size="5.500" fill="#666" font-family="Roboto">TOP</text>
        </svg>
      </div>
    </div>
  </div>
  <aside class="w-[18px] shrink-0 flex flex-col items-center pt-[4px] gap-[9px] bg-white text-[#d2d2d2]">
    <svg class="w-[14px] h-[14px] shrink-0" viewBox="0 0 14 14"><path d="M2 2l5-1 3 2v8H2z" fill="#d8741a"/><path d="M8 8h5v5H8z" fill="#eee" stroke="#777"/></svg>
    <svg class="w-[14px] h-[14px] shrink-0" viewBox="0 0 14 14"><path d="M7 1h4v5H7z" fill="#fff" stroke="#777"/><path d="M2 6h6v6H2z" fill="#d8a050" stroke="#777"/></svg>
    <svg class="w-[14px] h-[14px] shrink-0" viewBox="0 0 14 14"><path d="M2 2l10 10M12 2L2 12" stroke="#ccc" stroke-width="2"/></svg>
    <svg class="w-[14px] h-[14px] shrink-0" viewBox="0 0 14 14"><path d="M1 2h12v6H1z" fill="#8a5aa0"/><path d="M1 2h4v6H1z" fill="#d8a030"/><path d="M1 8h12v4H1z" fill="#eef"/><circle cx="7" cy="6" r="3" fill="#fff"/></svg>
    <svg class="w-[13px] h-[13px] shrink-0" viewBox="0 0 13 13"><path d="M1 1h11v11H1z" fill="#fff" stroke="#4d8a9a"/><path d="M3 3h2v2H3zM8 3h2v2H8z" fill="#c9871c"/><path d="M3 8h2v2H3zM8 8h2v2H8z" fill="#4d8a9a"/></svg>
    <svg class="w-[13px] h-[13px] shrink-0" viewBox="0 0 13 13"><path d="M1 1h11v11H1z" fill="#2c7f8f"/><path d="M2 12a4.500 5 0 0 1 9 0z" fill="#e8b030"/><path d="M4 12a2.500 3 0 0 1 5 0z" fill="#c9371c"/></svg>
    <svg class="w-[13px] h-[13px] shrink-0" viewBox="0 0 13 13"><circle cx="9" cy="4" r="2.500" fill="none" stroke="#ddd" stroke-width="1.500"/><path d="M7 6l-5 6" stroke="#ddd" stroke-width="1.500"/></svg>
    <svg class="w-[13px] h-[13px] shrink-0" viewBox="0 0 13 13"><path d="M6.500 1l5 3-5 3-5-3zM1.500 6l5 3 5-3M1.500 9l5 3 5-3" fill="none" stroke="#777"/></svg>
    <svg class="w-[10px] h-[9px] shrink-0" viewBox="0 0 10 9"><path d="M1 2h8v6H1z" fill="none" stroke="#ddd"/></svg>
    <span class="-mt-[7px] [writing-mode:vertical-rl] text-[7.5px] tracking-[0.4px] text-[#d6d6d6] whitespace-nowrap">Explore PathFinder</span>
  </aside>
</main>

<!-- status bar -->
<footer class="h-[14px] shrink-0 bg-[#0f6a84] text-[#dceef2] flex items-center text-[7.7px]">
  <span class="ml-[875px] whitespace-nowrap">0 items are selected</span>
  <div class="ml-auto flex items-center pr-[3px]">
    <span class="w-[10px] h-[10px] bg-[#f0e8d8]"></span>
    <svg class="w-[10px] h-[10px] ml-[4.600px]" viewBox="0 0 10 10"><circle cx="6" cy="4" r="3" fill="#f0e8d8"/><path d="M4 6L1 9" stroke="#fff" stroke-width="1.300"/></svg>
    <span class="w-[10px] h-[10px] ml-[4.600px] bg-[#f0d8c8] border border-[#d8743a]"></span>
    <span class="w-[10px] h-[10px] ml-[4.600px] bg-[#f6e6d4] flex items-center"><span class="w-full h-px bg-[#8a4a1a]"></span></span>
    <span class="w-[10px] h-[10px] ml-[4.600px] bg-[#f0e8e0] border border-[#c9871c]"></span>
    <span class="w-[10px] h-[10px] ml-[4.600px] bg-[#d8dfe2]"></span>
    <svg class="w-[11px] h-[11px] ml-[4px]" viewBox="0 0 11 11"><path d="M1 6h5v5H1z" fill="#d8841c"/><path d="M4 1h6v6H4z" fill="#e6e6e6"/></svg>
    <svg class="w-[11px] h-[11px] ml-[4px]" viewBox="0 0 11 11"><path d="M1 1h6v6H1z" fill="#cfd8dc"/><path d="M4 5h6v5H4z" fill="#a8641c"/></svg>
    <span class="w-[9px] h-[9px] ml-[4px] rounded-full bg-white flex items-center justify-center"><span class="w-[5px] h-px bg-[#0f6a84]"></span></span>
    <div class="relative w-[76px] h-px ml-[2px] bg-white"><span class="absolute left-[41px] -top-[3px] w-[3px] h-[7px] bg-white"></span></div>
    <span class="w-[9px] h-[9px] ml-[2px] rounded-full bg-white text-[#0f6a84] flex items-center justify-center text-[8px]">+</span>
    <span class="w-[11px] h-[8px] ml-[4px] rounded-[2px] bg-[#b01c2c] flex items-center justify-center"><span class="w-0 h-0 border-l-[3px] border-l-white border-y-[2px] border-y-transparent"></span></span>
    <span class="w-[10px] h-[10px] rounded-full bg-white flex items-center justify-center ml-[5px]"><span class="w-[4px] h-[4px] rounded-full bg-[#8a1c2c]"></span></span>
    <span class="w-[10px] h-[10px] rounded-[2px] bg-[#f3dbe0] ml-[6px] border border-white"></span>
  </div>
</footer>
</body>
</html>
